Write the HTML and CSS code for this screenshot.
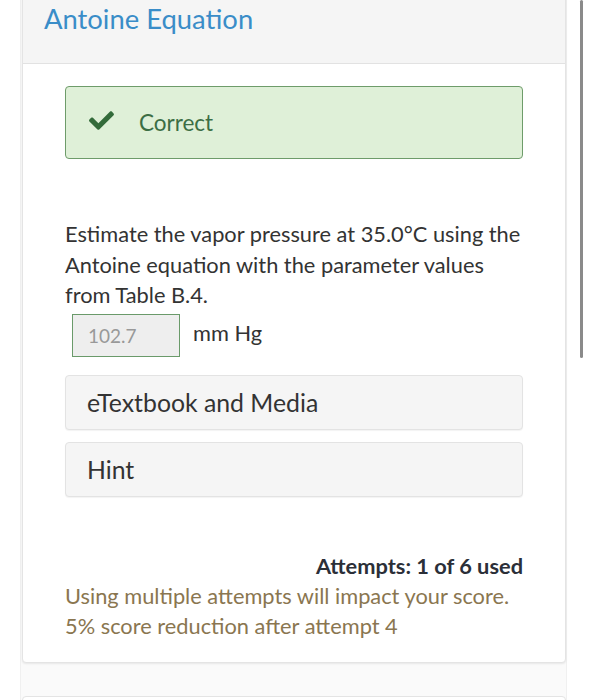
FILE: index.html
```html
<!DOCTYPE html>
<html>
<head>
<meta charset="utf-8">
<link rel="stylesheet" href="styles.css">
</head>
<body>
<div class="page">
  <div class="card">
    <div class="card-header">
      <h1 class="title">Antoine Equation</h1>
    </div>
    <div class="card-body">
      <div class="alert">
        <svg class="check" viewBox="0 60 512 390" width="25" height="19"><path d="M173.9 439.4l-166.4-166.4c-10-10-10-26.2 0-36.2l36.2-36.2c10-10 26.2-10 36.2 0L192 312.7 432.1 72.6c10-10 26.2-10 36.2 0l36.2 36.2c10 10 10 26.2 0 36.2L210.1 439.4c-10 10-26.2 10-36.2 0z" fill="#336b3a"/></svg>
        <span class="alert-text">Correct</span>
      </div>
      <p class="question">Estimate the vapor pressure at 35.0°C using the Antoine equation with the parameter values from Table B.4.</p>
      <div class="answer-row">
        <div class="answer-input">102.7</div>
        <span class="unit">mm Hg</span>
      </div>
      <div class="panel">eTextbook and Media</div>
      <div class="panel">Hint</div>
      <div class="attempts">Attempts: 1 of 6 used</div>
      <p class="warning">Using multiple attempts will impact your score.<br>5% score reduction after attempt 4</p>
    </div>
  </div>
  <div class="card next"></div>
</div>
<div class="scrollbar"></div>
</body>
</html>
```
FILE: styles.css
```css
html, body {
  margin: 0;
  padding: 0;
  background: #ffffff;
  font-family: Lato, "Open Sans", "Liberation Sans", sans-serif;
  color: #333333;
  overflow: hidden;
}
.page {
  margin: -20px 0 0 20px;
  width: 547px;
  height: 760px;
  background: #fafafa;
  border-left: 1px solid #f0f0f0;
  border-right: 1px solid #f0f0f0;
  box-sizing: border-box;
  padding: 0 0 0 1px;
}
.card {
  width: 544px;
  background: #ffffff;
  border: 1px solid #e4e4e4;
  border-radius: 4px;
  box-shadow: 0 1px 2px rgba(0,0,0,0.08);
  box-sizing: border-box;
}
.card-header {
  background: #f5f5f5;
  border-bottom: 1px solid #e2e2e2;
  height: 83px;
  padding: 0 0 0 21px;
  box-sizing: border-box;
}
.title {
  margin: 0;
  padding-top: 20px;
  font-size: 27.4px;
  font-weight: 400;
  color: #3a8dc8;
  line-height: 36px;
}
.card-body {
  padding: 22px 42px 20px 42px;
}
.alert {
  height: 73px;
  background: #dff0d8;
  border: 1px solid #6e9c6a;
  border-radius: 4px;
  box-sizing: border-box;
  display: flex;
  align-items: center;
  padding-left: 23px;
}
.check {
  margin-top: -4px;
}
.alert-text {
  margin-left: 25px;
  font-size: 22.5px;
  color: #3c6e45;
}
.question {
  margin: 60px 0 0 0;
  font-size: 21.8px;
  line-height: 30.5px;
  color: #333;
}
.answer-row {
  display: flex;
  align-items: center;
  margin-top: 3px;
  margin-left: 7px;
}
.answer-input {
  width: 108px;
  height: 43px;
  box-sizing: border-box;
  border: 1px solid #6a9a6a;
  background: #eeeeee;
  color: #999;
  font-size: 19px;
  display: flex;
  align-items: center;
  padding-left: 15px;
}
.unit {
  margin-left: 13px;
  font-size: 21.8px;
  color: #333;
  margin-top: -6px;
}
.panel {
  height: 55px;
  box-sizing: border-box;
  background: #f5f5f5;
  border: 1px solid #e3e3e3;
  border-radius: 4px;
  box-shadow: 0 1px 1px rgba(0,0,0,0.05);
  display: flex;
  align-items: center;
  padding-left: 21px;
  font-size: 24.8px;
  color: #333;
  margin-top: 12px;
}
.answer-row + .panel {
  margin-top: 18px;
}
.attempts {
  margin-top: 54px;
  text-align: right;
  font-size: 21.8px;
  font-weight: 700;
  color: #2b2f38;
  line-height: 30px;
}
.warning {
  margin: 0;
  font-size: 21.8px;
  line-height: 30.5px;
  color: #8a7650;
}
.next {
  margin-top: 33px;
  height: 60px;
  box-shadow: none;
}
.scrollbar {
  position: absolute;
  right: 6px;
  top: 0;
  width: 3px;
  height: 358px;
  background: #8a8a8a;
  border-radius: 2px;
}
```
